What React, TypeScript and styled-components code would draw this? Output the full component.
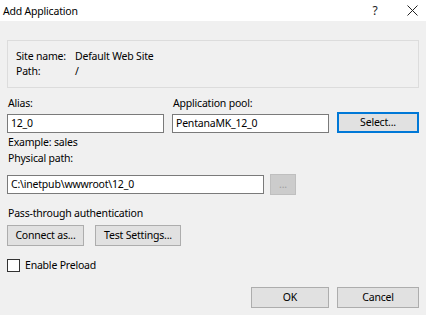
import React, { useState } from "react";
import styled, { createGlobalStyle } from "styled-components";

const GlobalStyle = createGlobalStyle`
  html, body {
    margin: 0;
    padding: 0;
    background: #f0f0f0;
  }
  body {
    font-family: "Noto Sans", "Open Sans", sans-serif;
    font-size: 10.5px;
    letter-spacing: -0.2px;
    color: #000;
  }
`;

const Dialog = styled.div`
  width: 426px;
  height: 315px;
  display: flex;
  flex-direction: column;
  background: #f0f0f0;
  overflow: hidden;
  white-space: nowrap;
`;

const TitleBar = styled.div`
  height: 21px;
  background: #fff;
  display: flex;
  align-items: center;
  padding-left: 3px;
`;

const Title = styled.div`
  flex: 1;
`;

const TitleButton = styled.div<{ $w: number }>`
  width: ${p => p.$w}px;
  display: flex;
  justify-content: center;
  align-items: center;
  font-size: 12px;
  color: #222;
`;

const Body = styled.div`
  flex: 1;
  display: flex;
  flex-direction: column;
  padding: 19px 7px 0 7px;
`;

const InfoBox = styled.div`
  height: 48px;
  box-sizing: border-box;
  border: 1px solid #dcdcdc;
  display: grid;
  grid-template-columns: 59px 1fr;
  align-content: center;
  padding-left: 8px;
  line-height: 15px;
`;

const Label = styled.div<{ $mt?: number }>`
  margin-top: ${p => p.$mt || 0}px;
  line-height: 15px;
  padding-left: 1px;
`;

const PoolRow = styled.div`
  display: grid;
  grid-template-columns: 157px 157px 82px;
  column-gap: 8px;
  margin-top: 8px;
  align-items: end;
`;

const Field = styled.div`
  display: flex;
  flex-direction: column;
  gap: 3px;
`;

const TextBox = styled.div<{ $w?: number }>`
  height: 19px;
  width: ${p => (p.$w ? `${p.$w}px` : "auto")};
  box-sizing: border-box;
  border: 1px solid #7a7a7a;
  background: #fff;
  padding: 0 3px;
  line-height: 17px;
  overflow: hidden;
`;

const Button = styled.button<{ $w: number; $focused?: boolean }>`
  width: ${p => p.$w}px;
  height: 21px;
  box-sizing: border-box;
  background: #e1e1e1;
  border: ${p => (p.$focused ? "2px solid #0078d7" : "1px solid #adadad")};
  font-family: inherit;
  font-size: inherit;
  letter-spacing: inherit;
  color: #000;
  padding: 0;
  line-height: 17px;
  cursor: default;
  &:disabled {
    background: #cccccc;
    border-color: #bfbfbf;
    color: #a0a0a0;
  }
`;

const PathRow = styled.div`
  display: flex;
  align-items: center;
  gap: 6px;
  margin-top: 8px;
`;

const ButtonRow = styled.div<{ $gap: number; $mt: number }>`
  display: flex;
  gap: ${p => p.$gap}px;
  margin-top: ${p => p.$mt}px;
`;

const CheckRow = styled.label`
  display: flex;
  align-items: center;
  gap: 5px;
  margin-top: 12px;
  line-height: 15px;
`;

const CheckBox = styled.span<{ $checked: boolean }>`
  width: 13px;
  height: 13px;
  box-sizing: border-box;
  border: 1px solid #333;
  background: #fff;
  display: inline-flex;
  align-items: center;
  justify-content: center;
  font-size: 10px;
`;

const Spacer = styled.div`
  flex: 1;
`;

const Footer = styled.div`
  display: flex;
  justify-content: flex-end;
  gap: 8px;
  padding: 0 0 7px 0;
`;

const CloseIcon = () => (
  <svg width="11" height="11" viewBox="0 0 11 11">
    <path d="M0.5 0.5 L10.5 10.5 M10.5 0.5 L0.5 10.5" stroke="#222" strokeWidth="1" fill="none" />
  </svg>
);

export default function App() {
  const [preload, setPreload] = useState(false);
  return (
    <>
      <GlobalStyle />
      <Dialog>
        <TitleBar>
          <Title>Add Application</Title>
          <TitleButton $w={46}>?</TitleButton>
          <TitleButton $w={28}>
            <CloseIcon />
          </TitleButton>
        </TitleBar>
        <Body>
          <InfoBox>
            <div>Site name:</div>
            <div>Default Web Site</div>
            <div>Path:</div>
            <div>/</div>
          </InfoBox>
          <PoolRow>
            <Field>
              <Label>Alias:</Label>
              <TextBox>12_0</TextBox>
            </Field>
            <Field>
              <Label>Application pool:</Label>
              <TextBox>PentanaMK_12_0</TextBox>
            </Field>
            <Button $w={82} $focused>
              Select...
            </Button>
          </PoolRow>
          <Label $mt={2}>Example: sales</Label>
          <Label $mt={1}>Physical path:</Label>
          <PathRow>
            <TextBox $w={257}>C:\inetpub\wwwroot\12_0</TextBox>
            <Button $w={26} disabled>
              ...
            </Button>
          </PathRow>
          <Label $mt={11}>Pass-through authentication</Label>
          <ButtonRow $gap={11} $mt={4}>
            <Button $w={77}>Connect as...</Button>
            <Button $w={86}>Test Settings...</Button>
          </ButtonRow>
          <CheckRow onClick={() => setPreload(!preload)}>
            <CheckBox $checked={preload}>{preload ? "✓" : ""}</CheckBox>
            Enable Preload
          </CheckRow>
          <Spacer />
          <Footer>
            <Button $w={78}>OK</Button>
            <Button $w={82}>Cancel</Button>
          </Footer>
        </Body>
      </Dialog>
    </>
  );
}
